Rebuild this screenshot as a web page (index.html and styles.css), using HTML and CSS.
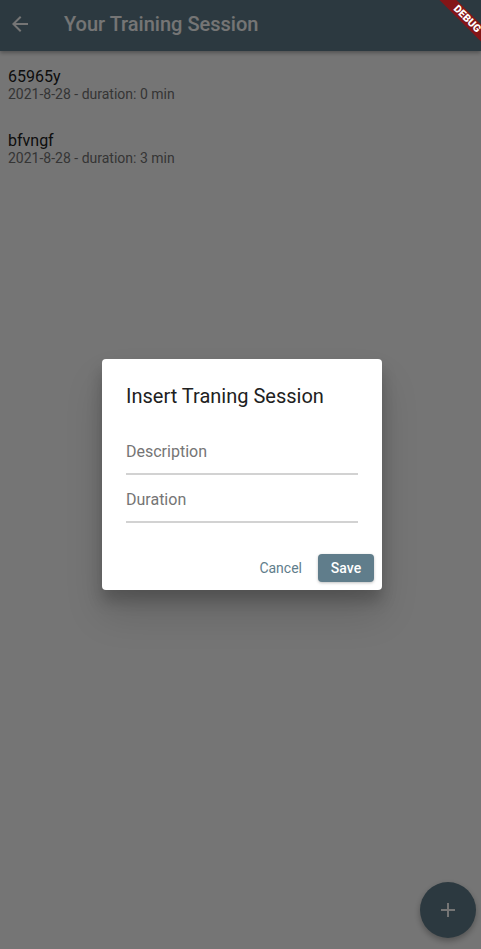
FILE: index.html
```html
<!DOCTYPE html>
<html lang="en">
  <head>
    <meta charset="UTF-8" />
    <title>Your Training Session</title>
    <link rel="stylesheet" href="styles.css">
  </head>
  <body>
    <div class="app">
      <header class="appbar">
        <button class="back" aria-label="Back">
          <svg viewBox="0 0 24 24" width="24" height="24">
            <path d="M20 11H7.83l5.59-5.59L12 4l-8 8 8 8 1.41-1.41L7.83 13H20v-2z" fill="#fff" />
          </svg>
        </button>
        <h1 class="title">Your Training Session</h1>
      </header>

      <ul class="sessions">
        <li class="session">
          <div class="session-name">65965y</div>
          <div class="session-info">2021-8-28 - duration: 0 min</div>
        </li>
        <li class="session">
          <div class="session-name">bfvngf</div>
          <div class="session-info">2021-8-28 - duration: 3 min</div>
        </li>
      </ul>

      <button class="fab" aria-label="Add">
        <svg viewBox="0 0 24 24" width="24" height="24">
          <path d="M19 13h-6v6h-2v-6H5v-2h6V5h2v6h6v2z" fill="#fff" />
        </svg>
      </button>

      <div class="barrier">
        <form class="dialog" id="sessionForm">
          <h2 class="dialog-title">Insert Traning Session</h2>
          <input class="field" type="text" name="description" placeholder="Description" />
          <input class="field" type="number" name="duration" placeholder="Duration" />
          <div class="actions">
            <button type="button" class="btn-text">Cancel</button>
            <button type="submit" class="btn-save">Save</button>
          </div>
        </form>
      </div>

      <div class="debug">DEBUG</div>
    </div>
  </body>
</html>
```

FILE: styles.css
```css
* {
  box-sizing: border-box;
}
body {
  margin: 0;
  font-family: Roboto, "Noto Sans", sans-serif;
  background: #fff;
}
.app {
  position: relative;
  width: 481px;
  height: 949px;
  overflow: hidden;
  background: #fff;
}
.appbar {
  display: flex;
  align-items: center;
  height: 51px;
  padding-bottom: 3px;
  background: #607d8b;
  box-shadow: 0 2px 4px rgba(0, 0, 0, 0.3);
}
.back {
  display: flex;
  width: 24px;
  height: 24px;
  margin: 0 0 0 8px;
  padding: 0;
  border: none;
  background: none;
}
.title {
  margin: 0 0 0 32px;
  font-size: 20px;
  font-weight: 500;
  color: #fff;
}
.sessions {
  list-style: none;
  margin: 0;
  padding: 0;
}
.session {
  height: 64px;
  padding: 16px 8px 0;
}
.session-name {
  font-size: 16px;
  line-height: 19px;
  color: #212121;
}
.session-info {
  font-size: 14px;
  line-height: 16px;
  color: #757575;
}
.fab {
  position: absolute;
  right: 5px;
  bottom: 11px;
  display: flex;
  align-items: center;
  justify-content: center;
  width: 56px;
  height: 56px;
  border: none;
  border-radius: 50%;
  background: #607d8b;
  box-shadow: 0 3px 6px rgba(0, 0, 0, 0.3);
}
.barrier {
  position: absolute;
  inset: 0;
  display: flex;
  align-items: center;
  justify-content: center;
  padding-left: 3px;
  background: rgba(0, 0, 0, 0.54);
}
.dialog {
  width: 280px;
  padding: 25px 8px 8px 24px;
  background: #fff;
  border-radius: 4px;
  box-shadow: 0 11px 15px rgba(0, 0, 0, 0.2), 0 24px 38px rgba(0, 0, 0, 0.14);
}
.dialog-title {
  margin: 0 16px 19px 0;
  font-size: 20px;
  line-height: 24px;
  font-weight: 400;
  color: #212121;
}
.field {
  display: block;
  width: 232px;
  height: 48px;
  margin: 0;
  padding: 14px 0 12px;
  border: none;
  border-bottom: 2px solid #d2d2d2;
  font-family: inherit;
  font-size: 16px;
  line-height: 20px;
  color: #212121;
  outline: none;
}
.field::placeholder {
  color: #757575;
}
.actions {
  display: flex;
  justify-content: flex-end;
  align-items: center;
  gap: 8px;
  margin-top: 31px;
}
.btn-text,
.btn-save {
  height: 28px;
  padding: 0 8px;
  border: none;
  border-radius: 4px;
  font-family: inherit;
  font-size: 14px;
  cursor: pointer;
}
.btn-text {
  background: none;
  color: #607d8b;
}
.btn-save {
  width: 56px;
  background: #607d8b;
  color: #fff;
  font-weight: 500;
  box-shadow: 0 1px 3px rgba(0, 0, 0, 0.25);
}
.debug {
  position: absolute;
  top: 13px;
  left: 427px;
  width: 80px;
  height: 12px;
  background: rgba(184, 0, 0, 0.63);
  color: #fff;
  font-size: 10.5px;
  font-weight: 900;
  line-height: 12px;
  text-align: center;
  transform: rotate(45deg);
}
```
